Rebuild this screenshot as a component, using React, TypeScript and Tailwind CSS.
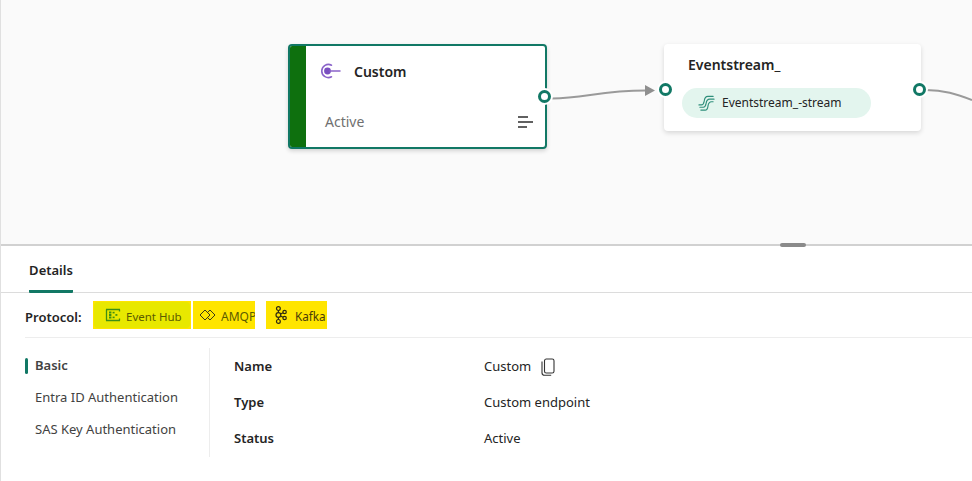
import React from "react";

const font = "font-['Noto_Sans','Open_Sans',sans-serif]";

const Port = ({ className }: { className: string }) => (
  <div className={`absolute w-[13px] h-[13px] rounded-full bg-white border-[3px] border-[#117865] shadow-[0_0_0_2px_#ffffff] ${className}`} />
);

const CustomIcon = () => (
  <svg width="24" height="24" viewBox="0 0 24 24" fill="none">
    <path d="M14.5 6.2a6.6 6.6 0 1 0 0 11.6" stroke="#8a63c9" strokeWidth="1.6" strokeLinecap="round" />
    <circle cx="10.5" cy="12" r="3.4" fill="#7a4fc0" />
    <path d="M13 12h10" stroke="#8a63c9" strokeWidth="1.5" strokeLinecap="round" />
  </svg>
);

const StreamIcon = () => (
  <svg width="17" height="17" viewBox="0 0 18 18" fill="none" stroke="#2f8f7b" strokeWidth="1.2" strokeLinecap="round">
    <path d="M1 10.5h2.6c2.4 0 2.6-2 3-4.2C7 3.6 8 1.5 10.4 1.5H16" />
    <path d="M2 13h3.6c2.4 0 2.6-2 3-4.2C9 6 10 4.4 12.4 4.4H17" />
    <path d="M3 16h4.6c2.4 0 2.6-2 3-4.4C11 8.8 12 7.2 14.4 7.2H16" />
  </svg>
);

const EventHubIcon = () => (
  <svg className="shrink-0" width="16" height="14" viewBox="0 0 16 14" fill="none">
    <path d="M1 1.5h14M1 12.5h14M1.5 1.5v11M14.5 1.5v2M14.5 10.5v2" stroke="#3f8f14" strokeWidth="1.3" />
    <rect x="4" y="3.5" width="2.4" height="2" fill="#3f8f14" />
    <rect x="4" y="6" width="2.4" height="2" fill="#3f8f14" />
    <rect x="4" y="8.5" width="2.4" height="2" fill="#3f8f14" />
    <rect x="7.6" y="3.8" width="2" height="1.6" fill="#3f8f14" />
    <rect x="7.6" y="8.6" width="2" height="1.6" fill="#3f8f14" />
    <rect x="10.4" y="6.1" width="2" height="1.7" fill="#3f8f14" />
  </svg>
);

const AmqpIcon = () => (
  <svg className="shrink-0" width="17" height="12" viewBox="0 0 17 12" fill="none" stroke="#3b3a1a" strokeWidth="1">
    <path d="M6 1 1 6l5 5 5-5-5-5" />
    <path d="M11 1l5 5-5 5-2.5-2.5M8.5 3.5 11 1" />
  </svg>
);

const KafkaIcon = () => (
  <svg className="shrink-0" width="12" height="18" viewBox="0 0 12 18" fill="none" stroke="#2f2a10" strokeWidth="1.2">
    <circle cx="3.4" cy="2.6" r="1.9" />
    <circle cx="3.4" cy="9" r="2.4" />
    <circle cx="3.4" cy="15.4" r="1.9" />
    <circle cx="9.6" cy="6" r="1.7" />
    <circle cx="9.6" cy="12" r="1.7" />
    <path d="M3.4 4.5v2M3.4 11.4v2M5.6 8l2.5-1.3M5.6 10l2.5 1.3" />
  </svg>
);

const CopyIcon = () => (
  <svg width="14" height="18" viewBox="0 0 14 18" fill="none" stroke="#333333" strokeWidth="1.1">
    <rect x="3.5" y="1" width="9.5" height="14" rx="1.8" />
    <path d="M1 3.5v11.2c0 1.6 1 2.6 2.6 2.6h6.6" />
  </svg>
);

const Chip = ({ icon, label, className }: { icon: React.ReactNode; label: string; className: string }) => (
  <div className={`flex items-center overflow-hidden whitespace-nowrap ${className}`}>
    {icon}
    <span className="pt-[3px]">{label}</span>
  </div>
);

const Row = ({ label, children }: { label: string; children: React.ReactNode }) => (
  <div className="flex items-center h-[36px] pt-[2px]">
    <div className="w-[250px] text-[13px] font-semibold text-[#242424]">{label}</div>
    <div className="flex items-center text-[13px] text-[#242424]">{children}</div>
  </div>
);

export default function App() {
  return (
    <div className={`w-[972px] h-[481px] overflow-hidden bg-white border-l border-[#e0e0e0] flex flex-col ${font}`}>
      {/* Canvas */}
      <div className="relative h-[244px] shrink-0 bg-[#fafafa]">
        <svg className="absolute left-0 top-0" width="972" height="244" fill="none">
          <path d="M551 98.5C584 98 600 90.5 645 90.5" stroke="#9a9a9a" strokeWidth="2" />
          <path d="M644 85 654 90.5l-10 5.5z" fill="#8f8f8f" />
          <path d="M925 90c18 0 30 4 46 10" stroke="#9a9a9a" strokeWidth="2" />
        </svg>

        {/* Custom node */}
        <div className="absolute left-[287px] top-[44px] w-[259px] h-[105px] bg-white border-[2.5px] border-[#117865] rounded-[4px] shadow-[0_2px_4px_rgba(0,0,0,0.16)] flex">
          <div className="w-[16px] bg-[#0e700e] rounded-l-[2px] shrink-0" />
          <div className="flex-1 flex flex-col pl-[11px] pr-[12px]">
            <div className="flex items-center h-[24px] mt-[13px] gap-[13px]">
              <CustomIcon />
              <span className="text-[14px] font-semibold text-[#242424]">Custom</span>
            </div>
            <div className="flex items-center justify-between mt-[28px] pl-[8px]">
              <span className="text-[14px] text-[#707070]">Active</span>
              <svg width="16" height="14" viewBox="0 0 16 14" fill="none" stroke="#616161" strokeWidth="2">
                <path d="M1 2h10M1 7h15M1 12h9" />
              </svg>
            </div>
          </div>
          <Port className="-right-[6px] top-[44px]" />
        </div>

        {/* Eventstream node */}
        <div className="absolute left-[663px] top-[44px] w-[257px] h-[87px] bg-white rounded-[4px] shadow-[0_2px_5px_rgba(0,0,0,0.14)]">
          <div className="pl-[24px] pt-[10px] text-[14px] font-semibold text-[#242424] leading-[22px]">Eventstream_</div>
          <div className="ml-[18px] mt-[12px] w-[189px] h-[30px] rounded-full bg-[#e3f5ee] flex items-center pl-[16px] gap-[7px]">
            <StreamIcon />
            <span className="text-[12px] text-[#242424]">Eventstream_-stream</span>
          </div>
          <Port className="-left-[5px] top-[39px]" />
          <Port className="right-[-5px] top-[39px]" />
        </div>
      </div>

      {/* Splitter */}
      <div className="relative h-[2px] shrink-0 bg-[#d1d1d1]">
        <div className="absolute left-[779px] -top-[1px] w-[26px] h-[4px] rounded-full bg-[#8a8a8a]" />
      </div>

      {/* Tabs */}
      <div className="h-[47px] shrink-0 border-b border-[#dcdcdc] pl-[28px] flex items-end">
        <div className="h-[46px] w-[44px] border-b-[3px] border-[#117865] rounded-b-[1px] flex items-center justify-center pt-[5px] text-[13px] font-semibold text-[#242424] -mb-[1px]">
          Details
        </div>
      </div>

      {/* Protocols */}
      <div className="ml-[24px] h-[45px] shrink-0 border-b border-[#ededed] flex items-center">
        <span className="w-[68px] pt-[5px] text-[13px] font-semibold text-[#242424]">Protocol:</span>
        <div className="w-[98px] h-[28px] bg-[#ffe500] p-[1px] flex">
          <Chip className="flex-1 rounded-[4px] bg-[#e8e800] pl-[11px] gap-[5px] text-[11.5px] text-[#5b5b00]" icon={<EventHubIcon />} label="Event Hub" />
        </div>
        <Chip className="ml-[2px] w-[62px] h-[28px] bg-[#ffe500] pl-[6px] gap-[5px] text-[12px] text-[#5b5b00]" icon={<AmqpIcon />} label="AMQP" />
        <Chip className="ml-[11px] w-[61px] h-[28px] bg-[#ffe500] pl-[9px] gap-[8px] text-[11.7px] text-[#4a3a08]" icon={<KafkaIcon />} label="Kafka" />
      </div>

      {/* Details body */}
      <div className="flex pl-[24px] pt-[10px]">
        <div className="w-[185px] h-[109px] border-r border-[#ededed] text-[13px] text-[#424242] flex flex-col pt-[2px]">
          <div className="h-[32px] flex items-center relative pl-[10px] font-semibold">
            <div className="absolute left-0 top-[8px] w-[3px] h-[16px] rounded-full bg-[#117865]" />
            Basic
          </div>
          <div className="h-[32px] flex items-center pl-[10px]">Entra ID Authentication</div>
          <div className="h-[32px] flex items-center pl-[10px]">SAS Key Authentication</div>
        </div>
        <div className="pl-[24px]">
          <Row label="Name">
            Custom
            <span className="ml-[10px] flex"><CopyIcon /></span>
          </Row>
          <Row label="Type">Custom endpoint</Row>
          <Row label="Status">Active</Row>
        </div>
      </div>
    </div>
  );
}
